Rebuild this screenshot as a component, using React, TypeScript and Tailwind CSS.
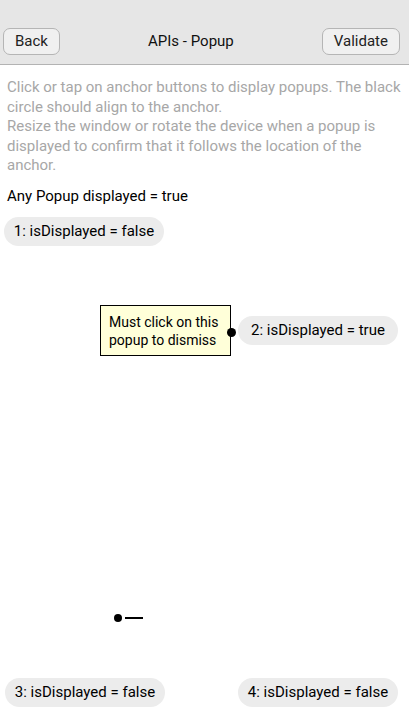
import React from 'react';

const font = { fontFamily: 'Roboto, "Liberation Sans", sans-serif' };

function Pill({ label }: { label: string }) {
  return (
    <button className="h-[29px] w-[160px] rounded-full bg-[#ececec] text-center text-[15px] text-black whitespace-nowrap">
      {label}
    </button>
  );
}

function NavButton({ label }: { label: string }) {
  return (
    <button className="h-[27px] rounded-[7px] border border-[#b5b5b5] bg-[#f0f0f0] px-[11px] text-[15px] text-[#222]">
      {label}
    </button>
  );
}

export default function App() {
  return (
    <div className="flex h-[714px] w-[409px] flex-col bg-white" style={font}>
      {/* nav bar */}
      <header className="flex h-[65px] items-end border-b border-[#b3b3b3] bg-[#e6e6e6] px-[3px] pb-[9px]">
        <div className="flex w-full items-center justify-between">
          <NavButton label="Back" />
          <span className="text-[15px] text-[#111]">APIs - Popup</span>
          <div className="pr-[6px]">
            <NavButton label="Validate" />
          </div>
        </div>
      </header>

      <div className="flex flex-1 flex-col px-[7px] pt-[13px] pb-[7px]">
        <p className="text-[15px] leading-[19.5px] text-[#a7a7a7]">
          Click or tap on anchor buttons to display popups. The black circle should align to the anchor.
          <br />
          Resize the window or rotate the device when a popup is displayed to confirm that it follows the location of the anchor.
        </p>

        <p className="mt-[10px] text-[15px] leading-[20px] text-black">Any Popup displayed = true</p>

        <div className="mt-[11px] -ml-[3px]">
          <Pill label="1: isDisplayed = false" />
        </div>

        <div className="relative flex flex-1 flex-col">
          <div className="mt-[70px] flex justify-end pr-[4px]">
            <Pill label="2: isDisplayed = true" />
          </div>

          {/* popup anchored to button 2 */}
          <div className="absolute left-[93px] top-[59px] w-[131px] border border-black bg-[#ffffd9] px-[8px] pt-[7px] pb-[6px] text-[14px] leading-[18px] text-black">
            Must click on this popup to dismiss
          </div>
          <div className="absolute left-[220px] top-[82px] h-[9px] w-[9px] rounded-full bg-black" />

          {/* anchor marker */}
          <div className="absolute left-[107px] top-[368px] flex items-center gap-[3px]">
            <div className="h-[8px] w-[8px] rounded-full bg-black" />
            <div className="h-[2px] w-[18px] bg-black" />
          </div>

          <div className="mt-auto -ml-[2px] flex items-center justify-between pr-[4px]">
            <Pill label="3: isDisplayed = false" />
            <Pill label="4: isDisplayed = false" />
          </div>
        </div>
      </div>
    </div>
  );
}
